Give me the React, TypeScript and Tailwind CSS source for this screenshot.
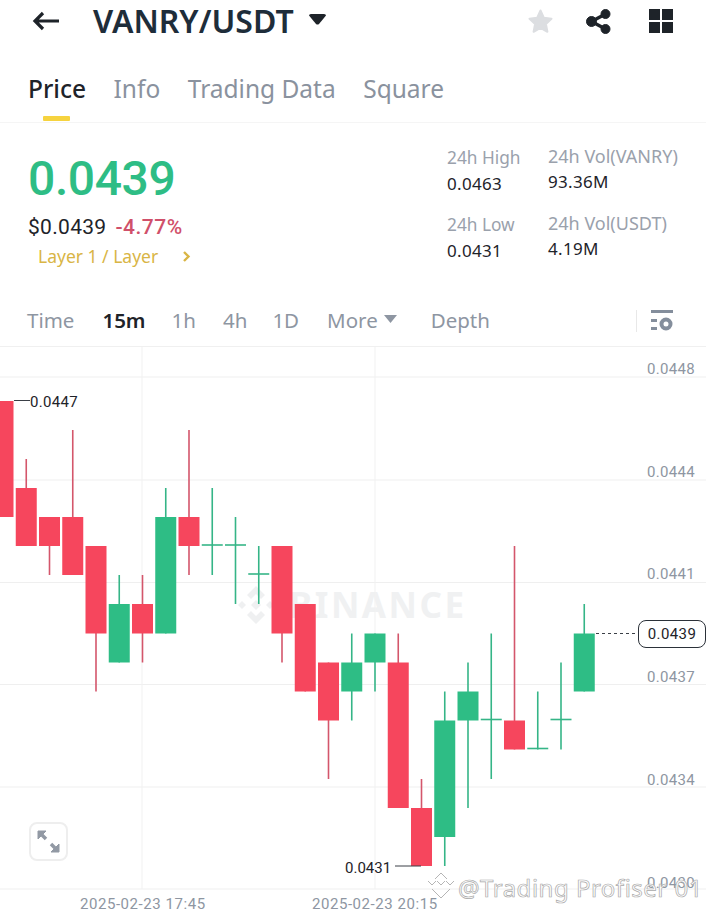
import React from "react";

const GREEN = "#2ebd85";
const RED = "#f6465d";
const WICK_RED = "#d4566b";

// y of each price step on the chart
const L = [401, 430, 459, 488, 517, 546, 575, 604, 633.5, 662.5, 691.5, 720.5, 749.5, 779, 808, 837, 866];

type Candle = { up: boolean; hi: number; lo: number; top: number; bot: number };

const candles: Candle[] = [
    { up: false, hi: 0, lo: 4, top: 0, bot: 4 },
    { up: false, hi: 2, lo: 5, top: 3, bot: 5 },
    { up: false, hi: 4, lo: 6, top: 4, bot: 5 },
    { up: false, hi: 1, lo: 6, top: 4, bot: 6 },
    { up: false, hi: 5, lo: 10, top: 5, bot: 8 },
    { up: true, hi: 6, lo: 9, top: 7, bot: 9 },
    { up: false, hi: 6, lo: 9, top: 7, bot: 8 },
    { up: true, hi: 3, lo: 8, top: 4, bot: 8 },
    { up: false, hi: 1, lo: 6, top: 4, bot: 5 },
    { up: true, hi: 3, lo: 6, top: 5, bot: 5 },
    { up: true, hi: 4, lo: 7, top: 5, bot: 5 },
    { up: true, hi: 5, lo: 7, top: 6, bot: 6 },
    { up: false, hi: 5, lo: 9, top: 5, bot: 8 },
    { up: false, hi: 7, lo: 10, top: 7, bot: 10 },
    { up: false, hi: 9, lo: 13, top: 9, bot: 11 },
    { up: true, hi: 8, lo: 11, top: 9, bot: 10 },
    { up: true, hi: 8, lo: 10, top: 8, bot: 9 },
    { up: false, hi: 8, lo: 14, top: 9, bot: 14 },
    { up: false, hi: 13, lo: 16, top: 14, bot: 16 },
    { up: true, hi: 10, lo: 16, top: 11, bot: 15 },
    { up: true, hi: 9, lo: 14, top: 10, bot: 11 },
    { up: true, hi: 8, lo: 13, top: 11, bot: 11 },
    { up: false, hi: 5, lo: 12, top: 11, bot: 12 },
    { up: true, hi: 10, lo: 12, top: 12, bot: 12 },
    { up: true, hi: 9, lo: 12, top: 11, bot: 11 },
    { up: true, hi: 7, lo: 10, top: 8, bot: 10 },
];

const ChartDrawing = () => (
    <svg className="absolute inset-0 w-full h-full" viewBox="0 347 706 564">
        {/* grid */}
        {[377, 480, 582.5, 684.5, 787, 889].map((y) => (
            <line key={y} x1="0" x2="706" y1={y} y2={y} stroke="#efefef" strokeWidth="1" />
        ))}
        {[142, 375].map((x) => (
            <line key={x} x1={x} x2={x} y1="347" y2="889" stroke="#f1f1f1" strokeWidth="1" />
        ))}

        {/* candles */}
        {candles.map((c, i) => {
            const x = 3 + 23.25 * i;
            const doji = c.top === c.bot;
            return (
                <g key={i}>
                    <line x1={x} x2={x} y1={L[c.hi]} y2={L[c.lo]} stroke={c.up ? "#35b587" : WICK_RED} strokeWidth="1.6" />
                    {doji ? (
                        <line x1={x - 10.5} x2={x + 10.5} y1={L[c.top] - 1} y2={L[c.top] - 1} stroke="#35b587" strokeWidth="1.6" />
                    ) : (
                        <rect x={x - 10.5} y={L[c.top]} width="21" height={L[c.bot] - L[c.top]} fill={c.up ? GREEN : RED} />
                    )}
                </g>
            );
        })}

        {/* hi / lo / last price leaders */}
        <line x1="14" x2="30" y1="400.5" y2="400.5" stroke="#3a3f46" strokeWidth="1" />
        <line x1="395" x2="421" y1="866" y2="866" stroke="#3a3f46" strokeWidth="1" />
        <line x1="596" x2="637" y1="633.5" y2="633.5" stroke="#3a3f46" strokeWidth="1" strokeDasharray="3 3" />
    </svg>
);

const BinanceDiamond = () => (
    <svg width="38" height="40" viewBox="0 0 38 40" fill="#eff0f1">
        <path d="M19 1l9 9-4 4-5-5-5 5-4-4z" />
        <path d="M19 39l-9-9 4-4 5 5 5-5 4 4z" />
        <path d="M5 16l4 4-4 4-4-4z" />
        <path d="M33 16l4 4-4 4-4-4z" />
        <path d="M19 15l5 5-5 5-5-5z" />
    </svg>
);

const StatBlock = ({ label, value, className }: { label: string; value: string; className?: string }) => (
    <div className={className}>
        <div className="leading-[22px] text-[#9aa1ac]">{label}</div>
        <div className="mt-[4px] text-[17px] leading-[22px] tracking-[0.3px] text-[#1e2329]">{value}</div>
    </div>
);

export default function App() {
    return (
        <div className="w-[706px] h-[911px] overflow-hidden bg-white font-['Noto_Sans','Liberation_Sans',sans-serif]">
            {/* Header */}
            <div className="h-[42px] flex items-center pl-[32px] pr-[33px]">
                <svg width="28" height="20" viewBox="0 0 28 20" fill="none" stroke="#1e2329" strokeWidth="3.2">
                    <path d="M27 10H3M11 2l-8 8 8 8" />
                </svg>
                <div className="ml-[33px] text-[32px] leading-[42px] font-semibold text-[#1e2d3a]">VANRY/USDT</div>
                <svg className="ml-[15px] mt-[-3px]" width="17" height="11" viewBox="0 0 17 11" fill="#1e2329">
                    <path d="M0 1.5Q0 0 2 0h13q2 0 2 1.5L10 10q-1.500 1-3 0z" />
                </svg>
                <div className="ml-auto flex items-center">
                    <svg width="27" height="27" viewBox="0 0 27 27" fill="#dcdee1" stroke="#dcdee1" strokeWidth="2" strokeLinejoin="round">
                        <path d="M13.500 2.500l3.400 7.300 7.600.9-5.600 5.300 1.500 7.800-6.900-3.900-6.900 3.900 1.500-7.800-5.600-5.300 7.600-.9z" />
                    </svg>
                    <svg className="ml-[31px]" width="27" height="27" viewBox="0 0 27 27" fill="#1e2329" stroke="#1e2329">
                        <circle cx="20.500" cy="6" r="4.500" />
                        <circle cx="20.500" cy="21" r="4.500" />
                        <circle cx="6.500" cy="13.500" r="5" />
                        <path d="M6.500 13.500L20.500 6M6.500 13.500L20.500 21" strokeWidth="3.500" fill="none" />
                    </svg>
                    <div className="ml-[37px] grid grid-cols-2 gap-[2px] w-[24px] h-[24px]">
                        <div className="bg-[#1e2329]" />
                        <div className="bg-[#1e2329]" />
                        <div className="bg-[#1e2329]" />
                        <div className="bg-[#1e2329]" />
                    </div>
                </div>
            </div>

            {/* Tabs */}
            <div className="h-[81px] pt-[28px] px-[28px] border-b border-[#f5f5f5]">
                <div className="flex gap-[27.5px] text-[24.5px] leading-[38px] text-[#8a929e]">
                    <div className="flex flex-col">
                        <span className="font-medium text-[#1e2329]">Price</span>
                        <div className="ml-[15px] mt-[8px] w-[27px] h-[5px] rounded-[1px] bg-[#f6d33f]" />
                    </div>
                    <span>Info</span>
                    <span>Trading Data</span>
                    <span>Square</span>
                </div>
            </div>

            {/* Price and 24h stats */}
            <div className="h-[174px] flex pl-[28px]">
                <div className="pt-[24px] w-[419px]">
                    <div className="h-[64px] text-[48px] leading-[64px] font-medium text-[#2ebd85] font-['Roboto',sans-serif] tracking-[-0.4px]">0.0439</div>
                    <div className="mt-[1px] flex items-center gap-[9px] h-[32px] font-['Roboto',sans-serif] text-[21px] tracking-[0.3px]">
                        <span className="text-[#1e2329]">$0.0439</span>
                        <span className="font-medium tracking-[0.5px] text-[#d0506a]">-4.77%</span>
                    </div>
                    <div className="ml-[10px] mt-[-1px] flex items-center h-[26px] text-[17.5px] text-[#d9b545]">
                        <span>Layer 1 / Layer</span>
                        <svg className="ml-[24px]" width="9" height="11" viewBox="0 0 9 11" fill="none" stroke="#d9b545" strokeWidth="2.400">
                            <path d="M2 1l4.500 4.500L2 10" />
                        </svg>
                    </div>
                </div>
                <div className="pt-[24px] w-[101px] text-[17.3px]">
                    <StatBlock label="24h High" value="0.0463" />
                    <StatBlock label="24h Low" value="0.0431" className="mt-[19px]" />
                </div>
                <div className="pt-[22px] text-[18px]">
                    <StatBlock label="24h Vol(VANRY)" value="93.36M" />
                    <StatBlock label="24h Vol(USDT)" value="4.19M" className="mt-[19px]" />
                </div>
            </div>

            {/* Interval bar */}
            <div className="h-[50px] flex items-center pl-[27px] pb-[2px] text-[20.5px] text-[#8e96a2] border-b border-[#f0f0f0]">
                <span>Time</span>
                <span className="ml-[28px] font-semibold text-[#1e2329]">15m</span>
                <span className="ml-[26px]">1h</span>
                <span className="ml-[27px]">4h</span>
                <span className="ml-[25px]">1D</span>
                <span className="ml-[28px]">More</span>
                <svg className="ml-[6px] mt-[-4px]" width="13" height="8" viewBox="0 0 13 8" fill="#8e96a2">
                    <path d="M0 0h13L6.500 8z" />
                </svg>
                <span className="ml-[34px]">Depth</span>
                <div className="ml-auto w-px h-[22px] bg-[#e8e8e8]" />
                <svg className="ml-[14px] mr-[33px]" width="22" height="22" viewBox="0 0 22 22" fill="#848e9c">
                    <rect x="0" y="0" width="22" height="3" />
                    <rect x="0" y="9" width="6" height="3" />
                    <rect x="0" y="17" width="6" height="3" />
                    <circle cx="15" cy="14" r="4.500" fill="none" stroke="#848e9c" strokeWidth="4" />
                </svg>
            </div>

            {/* Chart */}
            <div className="relative h-[564px] text-[15px] leading-[20px]">
                <div className="absolute left-[237px] top-[238px] flex items-center gap-[14px]">
                    <BinanceDiamond />
                    <span className="text-[35px] leading-[40px] font-bold tracking-[2.5px] text-[#f0f1f2]">BINANCE</span>
                </div>

                <ChartDrawing />

                <div className="absolute left-[30px] top-[45px] tracking-[0.3px] text-[#1e2329] font-['Roboto',sans-serif]">0.0447</div>
                <div className="absolute left-[345px] top-[511px] text-[#1e2329] font-['Roboto',sans-serif]">0.0431</div>

                {/* Price axis */}
                <div className="absolute right-[11px] top-[12px] text-[#8e96a2] tracking-[0.3px] font-['Roboto',sans-serif]">0.0448</div>
                <div className="absolute right-[11px] top-[115px] text-[#8e96a2] tracking-[0.3px] font-['Roboto',sans-serif]">0.0444</div>
                <div className="absolute right-[11px] top-[217px] text-[#8e96a2] tracking-[0.3px] font-['Roboto',sans-serif]">0.0441</div>
                <div className="absolute right-[11px] top-[320px] text-[#8e96a2] tracking-[0.3px] font-['Roboto',sans-serif]">0.0437</div>
                <div className="absolute right-[11px] top-[423px] text-[#8e96a2] tracking-[0.3px] font-['Roboto',sans-serif]">0.0434</div>
                <div className="absolute right-[11px] top-[526px] text-[#8e96a2] tracking-[0.3px] font-['Roboto',sans-serif]">0.0430</div>

                {/* Last price tag */}
                <div className="absolute left-[638px] top-[273px] w-[68px] h-[28px] flex items-center justify-center rounded-[8px] border border-[#2b3139] bg-white text-[#1e2329] tracking-[0.4px] font-['Roboto',sans-serif]">0.0439</div>

                {/* Time axis */}
                <div className="absolute left-[80px] top-[550px] leading-[14px] text-[#8e96a2] tracking-[0.55px] font-['Roboto',sans-serif]">2025-02-23 17:45</div>
                <div className="absolute left-[312px] top-[550px] leading-[14px] text-[#8e96a2] tracking-[0.55px] font-['Roboto',sans-serif]">2025-02-23 20:15</div>

                {/* Fullscreen button */}
                <div className="absolute left-[29px] top-[475px] w-[39px] h-[39px] flex items-center justify-center rounded-[8px] border-2 border-[#eeeeee] bg-white">
                    <svg width="23" height="23" viewBox="0 0 23 23" fill="#9299a4" stroke="#9299a4">
                        <path d="M1 1h8L1 9z" />
                        <path d="M22 22h-8l8-8z" />
                        <path d="M4 4l5 5M14 14l5 5" strokeWidth="3.500" fill="none" />
                    </svg>
                </div>

                {/* Square watermark */}
                <div className="absolute left-[427px] top-[523px] flex items-center gap-[3px]">
                    <svg width="28" height="36" viewBox="0 0 28 36" fill="none" stroke="#b5b5b5" strokeWidth="1">
                        <path d="M8 9l6-6 6 6" />
                        <path d="M1 11l4 4 4-4M10 11l4 4 4-4M19 11l4 4 4-4" />
                        <path d="M5 19l9 9 9-9" />
                    </svg>
                    <span className="text-[24px] leading-[34px] whitespace-nowrap tracking-[0.5px] text-white [-webkit-text-stroke:0.7px_#a9a9a9]">@Trading Profiser 01</span>
                </div>
            </div>
        </div>
    );
}
